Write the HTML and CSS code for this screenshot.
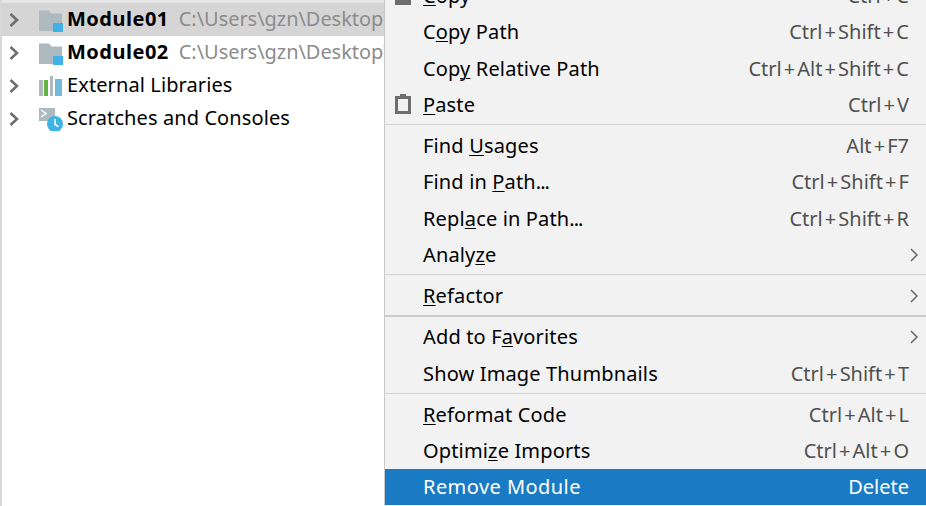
FILE: index.html
```html
<!DOCTYPE html>
<html lang="en">
<head>
<meta charset="utf-8">
<title>Context menu</title>
<link rel="stylesheet" href="styles.css">
</head>
<body>
<div class="screen">
  <aside class="tree">
    <div class="node selected">
      <svg class="chev" viewBox="0 0 10 14"><path d="M1.500 1 8 7l-6.500 6" /></svg>
      <svg class="ico" viewBox="0 0 24 24"><path class="folder" d="M0 2.500h10l2.500 3H23V23H0z"/><rect class="blue" x="14" y="15" width="10" height="9"/></svg>
      <span class="name bold">Module01</span><span class="path">C:\Users\gzn\Desktop\Module01</span>
    </div>
    <div class="node">
      <svg class="chev" viewBox="0 0 10 14"><path d="M1.500 1 8 7l-6.500 6" /></svg>
      <svg class="ico" viewBox="0 0 24 24"><path class="folder" d="M0 2.500h10l2.500 3H23V23H0z"/><rect class="blue" x="14" y="15" width="10" height="9"/></svg>
      <span class="name bold">Module02</span><span class="path">C:\Users\gzn\Desktop\Module02</span>
    </div>
    <div class="node">
      <svg class="chev" viewBox="0 0 10 14"><path d="M1.500 1 8 7l-6.500 6" /></svg>
      <svg class="ico" viewBox="0 0 24 24"><rect class="folder" x="0" y="6" width="4" height="16"/><rect class="green" x="5" y="6" width="4" height="16"/><rect class="folder" x="11" y="2" width="3" height="20"/><rect class="bluebar" x="16" y="5" width="7" height="17"/></svg>
      <span class="name">External Libraries</span>
    </div>
    <div class="node">
      <svg class="chev" viewBox="0 0 10 14"><path d="M1.500 1 8 7l-6.500 6" /></svg>
      <svg class="ico" viewBox="0 0 24 24"><rect class="folder" x="0" y="1" width="16" height="13"/><path class="prompt" d="M2 3l5 3.500-5 3.500"/><circle class="blue" cx="16" cy="17" r="8"/><path class="hands" d="M16 12v5.500l3.500 2"/></svg>
      <span class="name">Scratches and Consoles</span>
    </div>
  </aside>
  <nav class="menu">
    <div class="item clipped">
      <svg class="micon" viewBox="0 0 16 20"><rect class="gray" x="0" y="2" width="16" height="18"/></svg>
      <span class="label"><u>C</u>opy</span><span class="keys">Ctrl<span class="plus">+</span>C</span>
    </div>
    <div class="item"><span class="label">C<u>o</u>py Path</span><span class="keys">Ctrl<span class="plus">+</span>Shift<span class="plus">+</span>C</span></div>
    <div class="item"><span class="label">Cop<u>y</u> Relative Path</span><span class="keys">Ctrl<span class="plus">+</span>Alt<span class="plus">+</span>Shift<span class="plus">+</span>C</span></div>
    <div class="item">
      <svg class="micon" viewBox="0 0 16 20"><path class="gray" fill-rule="evenodd" d="M0 2h5V0h6v2h5v18H0zM3 5v12h10V5z"/></svg>
      <span class="label"><u>P</u>aste</span><span class="keys">Ctrl<span class="plus">+</span>V</span>
    </div>
    <div class="sep"></div>
    <div class="item"><span class="label">Find <u>U</u>sages</span><span class="keys">Alt<span class="plus">+</span>F7</span></div>
    <div class="item"><span class="label">Find in <u>P</u>ath<span class="dots">...</span></span><span class="keys">Ctrl<span class="plus">+</span>Shift<span class="plus">+</span>F</span></div>
    <div class="item"><span class="label">Repl<u>a</u>ce in Path<span class="dots">...</span></span><span class="keys">Ctrl<span class="plus">+</span>Shift<span class="plus">+</span>R</span></div>
    <div class="item"><span class="label">Analy<u>z</u>e</span><svg class="sub" viewBox="0 0 8 14"><path d="M1 1l6 6-6 6"/></svg></div>
    <div class="sep"></div>
    <div class="item"><span class="label"><u>R</u>efactor</span><svg class="sub" viewBox="0 0 8 14"><path d="M1 1l6 6-6 6"/></svg></div>
    <div class="sep thick"></div>
    <div class="item"><span class="label">Add to F<u>a</u>vorites</span><svg class="sub" viewBox="0 0 8 14"><path d="M1 1l6 6-6 6"/></svg></div>
    <div class="item"><span class="label">Show Image Thumbnails</span><span class="keys">Ctrl<span class="plus">+</span>Shift<span class="plus">+</span>T</span></div>
    <div class="sep"></div>
    <div class="item"><span class="label"><u>R</u>eformat Code</span><span class="keys">Ctrl<span class="plus">+</span>Alt<span class="plus">+</span>L</span></div>
    <div class="item"><span class="label">Optimi<u>z</u>e Imports</span><span class="keys">Ctrl<span class="plus">+</span>Alt<span class="plus">+</span>O</span></div>
    <div class="item active"><span class="label">Remove Module</span><span class="keys">Delete</span></div>
  </nav>
</div>
</body>
</html>
```
FILE: styles.css
```css
* { box-sizing: border-box; }
html, body { margin: 0; padding: 0; height: 100%; overflow: hidden; background: #fff; }
body { font-family: "Noto Sans", "Open Sans", sans-serif; font-size: 20px; color: #000; }
.screen { display: flex; width: 926px; height: 506px; overflow: hidden; }
.tree { width: 384px; flex: none; overflow: hidden; padding-top: 3px; background: #fff; border-left: 2px solid #d8d8d8; box-shadow: inset 0 3px 0 #e6e6e6; }
.node { display: flex; align-items: center; height: 33px; white-space: nowrap; }
.node.selected { background: #d5d5d5; }
.chev { width: 10px; height: 14px; margin-left: 7px; flex: none; fill: none; stroke: #6e6e6e; stroke-width: 2.600; }
.ico { width: 24px; height: 24px; margin-left: 20px; margin-right: 4px; flex: none; }
.folder { fill: #aeb9c0; }
.blue { fill: #3db3e6; }
.green { fill: #62b543; }
.bluebar { fill: #74b8dc; }
.prompt { fill: none; stroke: #fff; stroke-width: 1.500; }
.hands { fill: none; stroke: #fff; stroke-width: 1.500; }
.name { letter-spacing: 0.1px; position: relative; top: -1px; }
.bold { font-weight: 700; letter-spacing: 0.5px; }
.path { margin-left: 10px; color: #8c8c8c; letter-spacing: -0.05px; position: relative; top: -1px; }
.menu { flex: 1; display: flex; flex-direction: column; margin-top: -22.800px; background: #f2f2f2; border-left: 1px solid #c8c8c8; height: 529px; }
.item { display: flex; align-items: center; justify-content: space-between; height: 36.400px; padding: 0 17px 0 38px; position: relative; white-space: nowrap; flex: none; }
.label { letter-spacing: 0.15px; }
.label u { text-underline-offset: 2px; text-decoration-thickness: 1px; }
.dots { letter-spacing: -1px; }
.keys { color: #505050; }
.plus { margin: 0 2.100px; }
.micon { position: absolute; left: 10px; top: 8px; width: 16px; height: 20px; }
.gray { fill: #6e6e6e; }
.sub { width: 8px; height: 14px; margin-right: -9px; fill: none; stroke: #666; stroke-width: 1.500; }
.sep { height: 1px; margin: 1.300px 0 2.300px; background: #d2d2d2; flex: none; }
.sep.thick { height: 2px; margin: 1px 0 1.600px; background: #cccccc; }
.item.active { background: #1a7bc4; color: #fff; }
.item.active .label { letter-spacing: 0.45px; }
.item.active .keys { color: #fff; }
```
